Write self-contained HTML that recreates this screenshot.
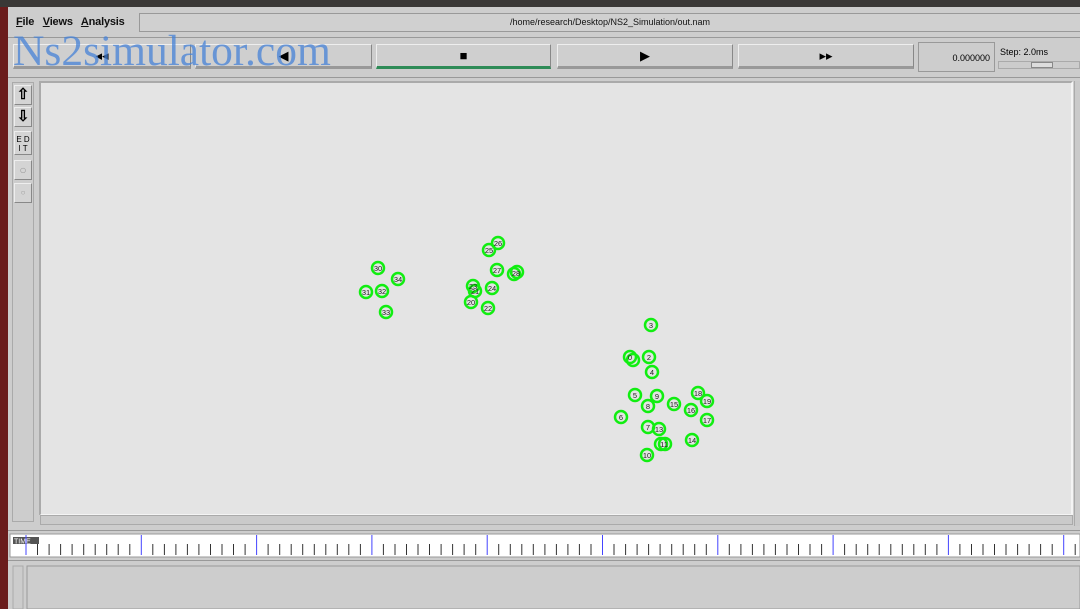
<!DOCTYPE html>
<html><head><style>
*{margin:0;padding:0;box-sizing:border-box}
body{width:1080px;height:609px;overflow:hidden;background:#cdcdcd;font-family:"Liberation Sans",sans-serif;position:relative}
.a{position:absolute}
.btn{position:absolute;top:44px;height:25px;background:#cfcfcf;border:1px solid #eee;border-right-color:#888;border-bottom:3px solid #999;display:flex;align-items:center;justify-content:center;font-size:13px}
.tb{position:absolute;left:14px;width:18px;height:20px;background:#d4d4d4;border:1px solid #eee;border-right-color:#888;border-bottom-color:#888;font-size:8px;text-align:center}
</style></head><body>
<div class="a" style="left:0;top:0;width:1080px;height:7px;background:#3a3836"></div>
<div class="a" style="left:0;top:7px;width:8px;height:602px;background:#6a1c1c"></div>
<div class="a" style="left:8px;top:7px;width:1072px;height:602px;background:#cdcdcd"></div>
<div class="a" style="left:16px;top:16px;font-size:11px;color:#111;font-weight:bold;letter-spacing:-0.2px"><u>F</u>ile&nbsp;&nbsp; <u>V</u>iews&nbsp;&nbsp; <u>A</u>nalysis</div>
<div class="a" style="left:139px;top:13px;width:941px;height:19px;border:1px solid #999;border-right:none;background:#d0d0d0;font-size:9px;text-align:center;line-height:17px;color:#111">/home/research/Desktop/NS2_Simulation/out.nam</div>
<div class="a" style="left:8px;top:37px;width:1072px;height:1px;background:#999"></div>
<div class="btn" style="left:13px;width:178px">◂◂</div>
<div class="btn" style="left:195px;width:177px">◀</div>
<div class="btn" style="left:376px;width:175px;border-bottom-color:#2e8b57">■</div>
<div class="btn" style="left:557px;width:176px">▶</div>
<div class="btn" style="left:738px;width:176px">▸▸</div>
<div class="a" style="left:918px;top:42px;width:77px;height:30px;border:1px solid #999;font-size:9px;text-align:right;padding-right:4px;line-height:30px">0.000000</div>
<div class="a" style="left:1000px;top:47px;font-size:9px">Step: 2.0ms</div>
<div class="a" style="left:998px;top:61px;width:82px;height:8px;border:1px solid #aaa;background:#ccc"></div>
<div class="a" style="left:1031px;top:62px;width:22px;height:6px;border:1px solid #888;background:#ddd"></div>
<div class="a" style="left:13px;top:26px;font-family:'Liberation Serif',serif;font-size:43.5px;color:rgba(70,130,215,0.75)">Ns2simulator.com</div>
<div class="a" style="left:8px;top:77px;width:1072px;height:1px;background:#999"></div>
<div class="a" style="left:12px;top:82px;width:22px;height:440px;border:1px solid #aaa"></div>
<div class="tb" style="top:85px;font-size:15px;line-height:18px;font-weight:bold">⇧</div>
<div class="tb" style="top:107px;font-size:15px;line-height:18px;font-weight:bold">⇩</div>
<div class="tb" style="top:131px;height:24px;line-height:9px;padding-top:3px">E D<br>I T</div>
<div class="tb" style="top:160px;font-size:12px;line-height:18px;color:#999">○</div>
<div class="tb" style="top:183px;font-size:8px;line-height:18px;color:#999">○</div>
<div class="a" style="left:39px;top:81px;width:1034px;height:435px;border:2px solid #aaa;border-right-color:#f4f4f4;border-bottom-color:#f4f4f4;background:#e4e4e4"></div>
<div class="a" style="left:40px;top:515px;width:1033px;height:10px;background:#cacaca;border:1px solid #aaa"></div>
<div class="a" style="left:1074px;top:81px;width:6px;height:445px;background:#cacaca;border-left:1px solid #aaa"></div>
<div class="a" style="left:8px;top:530px;width:1072px;height:1px;background:#999"></div>
<svg class="a" style="left:0;top:0" width="1080" height="609">
<rect x="10" y="534" width="1070" height="23" fill="#fff" stroke="#999"/>
<rect x="13" y="537" width="26" height="7" fill="#555"/>
<text x="14" y="543.5" font-size="7" fill="#fff" font-family="Liberation Sans">TIME</text>
<g fill="none" stroke="#11ee11" stroke-width="2.5">
<circle cx="378" cy="268" r="6"/><circle cx="398" cy="279" r="6"/><circle cx="366" cy="292" r="6"/><circle cx="382" cy="291" r="6"/><circle cx="386" cy="312" r="6"/>
<circle cx="498" cy="243" r="6"/><circle cx="489" cy="250" r="6"/><circle cx="497" cy="270" r="6"/><circle cx="517" cy="272" r="6"/><circle cx="514" cy="274" r="6"/><circle cx="473" cy="286" r="6"/><circle cx="475" cy="291" r="6"/><circle cx="492" cy="288" r="6"/><circle cx="471" cy="302" r="6"/><circle cx="488" cy="308" r="6"/>
<circle cx="651" cy="325" r="6"/><circle cx="630" cy="357" r="6"/><circle cx="633" cy="360" r="6"/><circle cx="649" cy="357" r="6"/><circle cx="652" cy="372" r="6"/><circle cx="635" cy="395" r="6"/><circle cx="657" cy="396" r="6"/><circle cx="648" cy="406" r="6"/><circle cx="674" cy="404" r="6"/><circle cx="698" cy="393" r="6"/><circle cx="707" cy="401" r="6"/><circle cx="691" cy="410" r="6"/><circle cx="621" cy="417" r="6"/><circle cx="707" cy="420" r="6"/><circle cx="648" cy="427" r="6"/><circle cx="659" cy="429" r="6"/><circle cx="661" cy="444" r="6"/><circle cx="665" cy="444" r="6"/><circle cx="692" cy="440" r="6"/><circle cx="647" cy="455" r="6"/>
</g>
<g font-size="7.5" fill="#222" text-anchor="middle" font-family="Liberation Sans">
<text x="378" y="271">30</text><text x="398" y="282">34</text><text x="366" y="295">31</text><text x="382" y="294">32</text><text x="386" y="315">33</text>
<text x="498" y="246">26</text><text x="489" y="253">25</text><text x="497" y="273">27</text><text x="516" y="276">28</text><text x="473" y="289">23</text><text x="475" y="294">21</text><text x="492" y="291">24</text><text x="471" y="305">20</text><text x="488" y="311">22</text>
<text x="651" y="328">3</text><text x="630" y="360">0</text><text x="649" y="360">2</text><text x="652" y="375">4</text><text x="635" y="398">5</text><text x="657" y="399">9</text><text x="648" y="409">8</text><text x="674" y="407">15</text><text x="698" y="396">18</text><text x="707" y="404">19</text><text x="691" y="413">16</text><text x="621" y="420">6</text><text x="707" y="423">17</text><text x="648" y="430">7</text><text x="659" y="432">13</text><text x="664" y="447">11</text><text x="692" y="443">14</text><text x="647" y="458">10</text>
</g>
<g stroke="#333" stroke-width="1" id="ticks"></g>
<rect x="8" y="560" width="1072" height="1" fill="#999"/>
<rect x="13" y="566" width="10" height="43" fill="#ccc" stroke="#aaa"/>
<rect x="27" y="566" width="1053" height="43" fill="#cdcdcd" stroke="#999"/>
</svg>
<script>
var g=document.getElementById('ticks'),s='';
for(var i=0;i<94;i++){var x=26+i*11.53;var maj=i%10==0;
s+='<line x1="'+x.toFixed(1)+'" x2="'+x.toFixed(1)+'" y1="'+(maj?535:544)+'" y2="555" stroke="'+(maj?'#4444ff':'#333')+'"/>';}
g.innerHTML=s;
</script>
</body></html>
